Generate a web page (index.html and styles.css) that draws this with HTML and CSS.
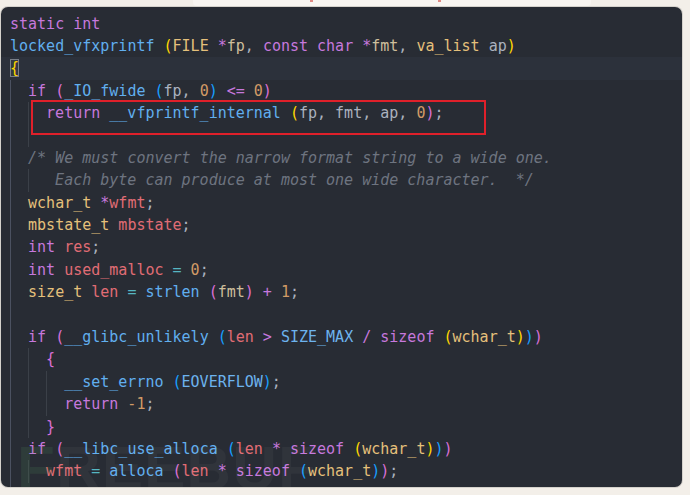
FILE: index.html
```html
<!DOCTYPE html>
<html>
<head>
<meta charset="utf-8">
<link rel="stylesheet" href="styles.css">
</head>
<body>
<div class="page">
  <div class="topstrip">
    <div class="topbox"><span class="redmark m1"></span><span class="redmark m2"></span></div>
  </div>
  <div class="panel">
    <div class="watermark"><span class="wm-f">F</span>REEBUF</div>
    <div class="code">
      <div class="ln"><span class="k">static</span> <span class="k">int</span></div>
      <div class="ln"><span class="f">locked_vfxprintf</span> <span class="b1">(</span><span class="t">FILE</span> <span class="k">*</span><span class="p">fp</span>, <span class="k">const</span> <span class="k">char</span> <span class="k">*</span><span class="p">fmt</span>, <span class="t">va_list</span> ap<span class="b1">)</span></div>
      <div class="ln cur"><span class="bm b1">{</span></div>
      <div class="ln"><span class="g a"></span><span class="k">if</span> <span class="b2">(</span><span class="f">_IO_fwide</span> <span class="b3">(</span>fp, <span class="n">0</span><span class="b3">)</span> <span class="k">&lt;=</span> <span class="n">0</span><span class="b2">)</span></div>
      <div class="ln"><span class="g a"></span><span class="g"></span><span class="k">return</span> <span class="f">__vfprintf_internal</span> <span class="b1">(</span>fp, fmt, ap, <span class="n">0</span><span class="b2">)</span>;</div>
      <div class="ln"><span class="g a"></span><span class="g"></span></div>
      <div class="ln"><span class="g a"></span><span class="c">/* We must convert the narrow format string to a wide one.</span></div>
      <div class="ln"><span class="g a"></span><span class="g"></span><span class="c"> Each byte can produce at most one wide character.  */</span></div>
      <div class="ln"><span class="g a"></span><span class="t">wchar_t</span> <span class="k">*</span><span class="v">wfmt</span>;</div>
      <div class="ln"><span class="g a"></span><span class="t">mbstate_t</span> <span class="v">mbstate</span>;</div>
      <div class="ln"><span class="g a"></span><span class="k">int</span> <span class="v">res</span>;</div>
      <div class="ln"><span class="g a"></span><span class="k">int</span> <span class="v">used_malloc</span> <span class="o">=</span> <span class="n">0</span>;</div>
      <div class="ln"><span class="g a"></span><span class="t">size_t</span> <span class="v">len</span> <span class="o">=</span> <span class="f">strlen</span> <span class="b2">(</span><span class="p">fmt</span><span class="b2">)</span> <span class="k">+</span> <span class="n">1</span>;</div>
      <div class="ln"><span class="g a"></span></div>
      <div class="ln"><span class="g a"></span><span class="k">if</span> <span class="b2">(</span><span class="f">__glibc_unlikely</span> <span class="b3">(</span><span class="v">len</span> <span class="k">&gt;</span> <span class="m">SIZE_MAX</span> <span class="k">/</span> <span class="k">sizeof</span> <span class="b1">(</span><span class="t">wchar_t</span><span class="b1">)</span><span class="b3">)</span><span class="b2">)</span></div>
      <div class="ln"><span class="g a"></span><span class="g"></span><span class="b2">{</span></div>
      <div class="ln"><span class="g a"></span><span class="g"></span><span class="g"></span><span class="f">__set_errno</span> <span class="b3">(</span><span class="m">EOVERFLOW</span><span class="b3">)</span>;</div>
      <div class="ln"><span class="g a"></span><span class="g"></span><span class="g"></span><span class="k">return</span> <span class="n">-1</span>;</div>
      <div class="ln"><span class="g a"></span><span class="g"></span><span class="b2">}</span></div>
      <div class="ln"><span class="g a"></span><span class="k">if</span> <span class="b2">(</span><span class="f">__libc_use_alloca</span> <span class="b3">(</span><span class="v">len</span> <span class="k">*</span> <span class="k">sizeof</span> <span class="b1">(</span><span class="t">wchar_t</span><span class="b1">)</span><span class="b3">)</span><span class="b2">)</span></div>
      <div class="ln"><span class="g a"></span><span class="g"></span><span class="v">wfmt</span> <span class="o">=</span> <span class="f">alloca</span> <span class="b2">(</span><span class="v">len</span> <span class="k">*</span> <span class="k">sizeof</span> <span class="b3">(</span><span class="t">wchar_t</span><span class="b3">)</span><span class="b2">)</span>;</div>
      <div class="ln"><span class="g a"></span><span class="k">else</span> <span class="k">if</span> <span class="b2">(</span><span class="b3">(</span><span class="v">wfmt</span> <span class="o">=</span> <span class="f">malloc</span> <span class="b1">(</span><span class="v">len</span> <span class="k">*</span> <span class="k">sizeof</span> <span class="b2">(</span><span class="t">wchar_t</span><span class="b2">)</span><span class="b1">)</span><span class="b3">)</span> <span class="o">==</span> <span class="m">NULL</span><span class="b2">)</span></div>
    </div>
    <div class="annot"></div>
  </div>
</div>
</body>
</html>
```
FILE: styles.css
```css
html, body {
  margin: 0;
  padding: 0;
  background: #f3efe9;
}
.page {
  width: 690px;
  height: 495px;
  overflow: hidden;
  padding-left: 1px;
  box-sizing: border-box;
}
.topstrip {
  height: 7px;
  position: relative;
}
.topbox {
  margin-left: 192px;
  width: 398px;
  height: 6px;
  background: #f8f5f1;
  border-radius: 0 0 4px 4px;
  position: relative;
}
.redmark {
  position: absolute;
  top: 0;
  width: 3px;
  height: 2px;
  background: #e08a84;
}
.m1 { left: 117px; }
.m2 { left: 245px; }
.panel {
  position: relative;
  width: 681px;
  height: 480px;
  background: #282c34;
  border-radius: 7px;
  overflow: hidden;
  box-shadow: 0 0 0 1px rgba(0, 0, 0, 0.12);
}
.code {
  padding: 5.5px 0 0 0;
  font-family: "DejaVu Sans Mono", monospace;
  font-size: 15px;
  line-height: 22.4px;
  color: #abb2bf;
}
.ln {
  height: 22.4px;
  padding-left: 9px;
  white-space: pre;
}
.cur {
  background: #2c313b;
}
.g {
  display: inline-block;
  width: 2ch;
  height: 22.4px;
  vertical-align: top;
  box-shadow: inset 1px 0 0 #3b4048;
}
.g.a {
  box-shadow: inset 1px 0 0 #4b5160;
}
.k { color: #c678dd; }
.f { color: #61afef; }
.t { color: #e5c07b; }
.v { color: #e06c75; }
.p { color: #cfbf9c; }
.n { color: #d19a66; }
.o { color: #56b6c2; }
.m { color: #6db3ee; }
.c { color: #6e7480; font-style: italic; }
.b1 { color: #ffd700; }
.b2 { color: #da70d6; }
.b3 { color: #179fff; }
.bm {
  outline: 1px solid #7a7f88;
  outline-offset: -1px;
  background: rgba(255, 255, 255, 0.04);
}
.annot {
  position: absolute;
  left: 30px;
  top: 93px;
  width: 455px;
  height: 35px;
  border: 2px solid #e0202a;
  box-sizing: border-box;
}
.watermark {
  position: absolute;
  left: 16px;
  top: 430px;
  font-family: "Liberation Sans", sans-serif;
  font-weight: bold;
  font-size: 62px;
  line-height: 62px;
  letter-spacing: 1px;
  color: rgba(255, 255, 255, 0.04);
  pointer-events: none;
}
.wm-f {
  color: rgba(90, 170, 100, 0.13);
}
```
